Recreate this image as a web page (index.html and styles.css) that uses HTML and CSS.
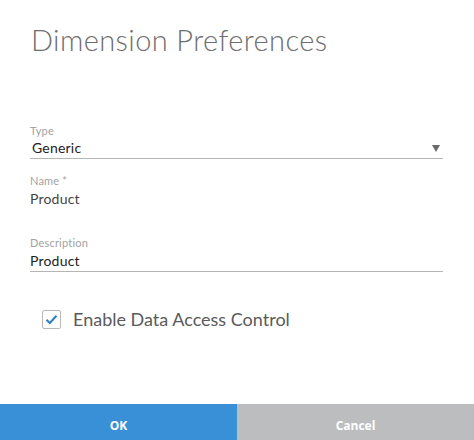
FILE: index.html
```html
<!DOCTYPE html>
<html>
<head>
<meta charset="utf-8">
<link rel="stylesheet" href="styles.css">
</head>
<body>
<div class="dialog">
  <div class="content">
    <h1 class="title">Dimension Preferences</h1>
    <div class="field field-type">
      <div class="label">Type</div>
      <div class="value value-select">
        <span>Generic</span>
        <span class="arrow"></span>
      </div>
    </div>
    <div class="field field-name">
      <div class="label">Name *</div>
      <div class="value value-plain">Product</div>
    </div>
    <div class="field field-desc">
      <div class="label">Description</div>
      <div class="value value-input">Product</div>
    </div>
    <div class="check-row">
      <span class="checkbox">
        <svg width="13" height="11" viewBox="0 0 13 11"><path d="M1.5 5.8 L4.8 9 L11.5 1.8" fill="none" stroke="#2b7fc8" stroke-width="2"/></svg>
      </span>
      <span class="check-label">Enable Data Access Control</span>
    </div>
  </div>
  <div class="buttons">
    <div class="btn btn-ok">OK</div>
    <div class="btn btn-cancel">Cancel</div>
  </div>
</div>
</body>
</html>
```
FILE: styles.css
```css
html, body {
  margin: 0;
  padding: 0;
  background: #fff;
}
.dialog {
  width: 474px;
  height: 440px;
  display: flex;
  flex-direction: column;
  font-family: Lato, "Open Sans", sans-serif;
}
.content {
  flex: 1;
  padding: 23px 31px 0 30px;
}
.title {
  margin: 0 0 0 1px;
  font-family: Lato, sans-serif;
  font-weight: 300;
  font-size: 29px;
  letter-spacing: 0.4px;
  line-height: 34px;
  color: #6e6e6e;
}
.field {
  display: flex;
  flex-direction: column;
}
.field-type { margin-top: 67px; }
.field-name { margin-top: 15px; }
.field-desc { margin-top: 27px; }
.label {
  font-size: 11px;
  line-height: 14px;
  letter-spacing: 0.2px;
  color: #a2a2a2;
}
.value {
  font-size: 14px;
  line-height: 20px;
  letter-spacing: 0.2px;
  color: #222;
}
.field-name .value, .field-desc .value { margin-top: 1px; }
.value-plain { color: #444; }
.value-select, .value-input {
  border-bottom: 1px solid #b5b5b5;
}
.value-select {
  display: flex;
  justify-content: space-between;
  align-items: center;
  padding-left: 2px;
  padding-right: 3px;
}
.arrow {
  width: 0;
  height: 0;
  border-left: 4.5px solid transparent;
  border-right: 4.5px solid transparent;
  border-top: 7px solid #6a6a6a;
  margin-top: 1px;
}
.check-row {
  display: flex;
  align-items: center;
  margin-top: 35px;
  padding-left: 12px;
  gap: 12px;
}
.checkbox {
  width: 17px;
  height: 17px;
  border: 1px solid #b9b9b9;
  border-radius: 2px;
  display: flex;
  align-items: center;
  justify-content: center;
}
.check-label {
  font-size: 18px;
  line-height: 24px;
  color: #5a5a5a;
}
.buttons {
  height: 36px;
  display: grid;
  grid-template-columns: 237px 1fr;
}
.btn {
  display: flex;
  align-items: center;
  justify-content: center;
  padding-top: 6px;
  font-family: "Open Sans", sans-serif;
  font-weight: 700;
  font-size: 12px;
  color: #fff;
}
.btn-ok { background: #3990d6; }
.btn-cancel { background: #bcbdbf; }
```
